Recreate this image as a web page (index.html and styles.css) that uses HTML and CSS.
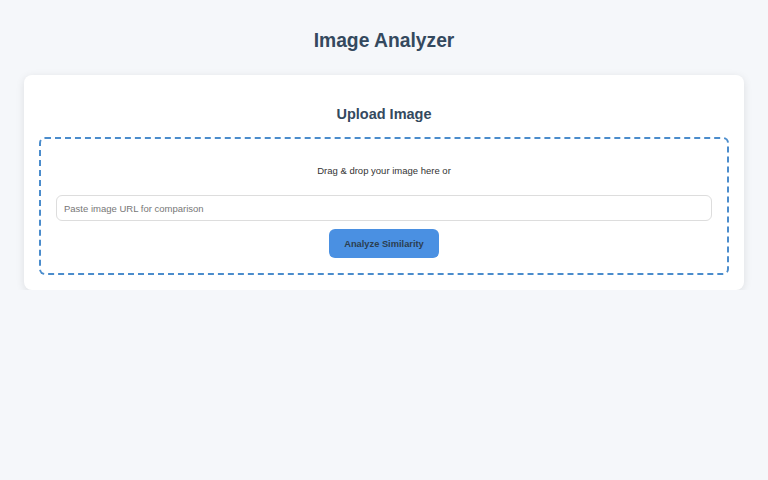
FILE: index.html
```html
<!DOCTYPE html>
<html lang="en">

	<head>
		<meta charset="UTF-8">
		<meta name="viewport" content="width=device-width, initial-scale=1.0">
		<title>Image Analyzer</title>
		<link rel="stylesheet" href="styles.css">
	</head>

	<body>

		<div class="app">
			<h1 class="title">Image Analyzer</h1>

			<!-- upload card -->
			<div class="card">
				<h2 class="card-title">Upload Image</h2>

				<div class="dropzone">
					<p class="drop-text">Drag &amp; drop your image here or</p>
					<input type="text" class="url-input" placeholder="Paste image URL for comparison">
					<button class="analyze-btn">Analyze Similarity</button>
				</div>
			</div>
		</div>

	</body>

</html>
```

FILE: styles.css
```css
body {
	font-family: "Liberation Sans", Arial, sans-serif;
	margin: 0;
	padding: 0;
	background-color: #f5f7fa;
	color: #34495e;
}

.app {
	padding: 0 24px;
}

.title {
	margin: 0;
	padding: 29px 0 22px;
	font-size: 19.3px;
	line-height: 24px;
	text-align: center;
	color: #34495e;
}

.card {
	background-color: #fff;
	border-radius: 8px;
	box-shadow: 0 2px 8px rgba(0, 0, 0, 0.1);
	padding: 15px;
}

.card-title {
	margin: 15px 0 14px;
	font-size: 14.5px;
	line-height: 18px;
	text-align: center;
	color: #34495e;
}

.dropzone {
	border: 2px dashed #4a8ccc;
	border-radius: 6px;
	padding: 15px;
	display: flex;
	flex-direction: column;
	align-items: center;
}

.drop-text {
	margin: 11px 0 18px;
	font-size: 9.5px;
	line-height: 12px;
	color: #333;
}

.url-input {
	box-sizing: border-box;
	width: 100%;
	height: 26px;
	padding: 0 7px;
	border: 1px solid #ddd;
	border-radius: 6px;
	font-family: "Liberation Sans", Arial, sans-serif;
	font-size: 9.5px;
	color: #333;
}

.url-input::placeholder {
	color: #777;
}

.analyze-btn {
	margin-top: 8px;
	width: 110px;
	height: 29px;
	border: none;
	border-radius: 6px;
	background-color: #4a90e2;
	color: #2c3e50;
	font-family: "Liberation Sans", Arial, sans-serif;
	font-size: 9.3px;
	font-weight: bold;
	cursor: pointer;
}
```
